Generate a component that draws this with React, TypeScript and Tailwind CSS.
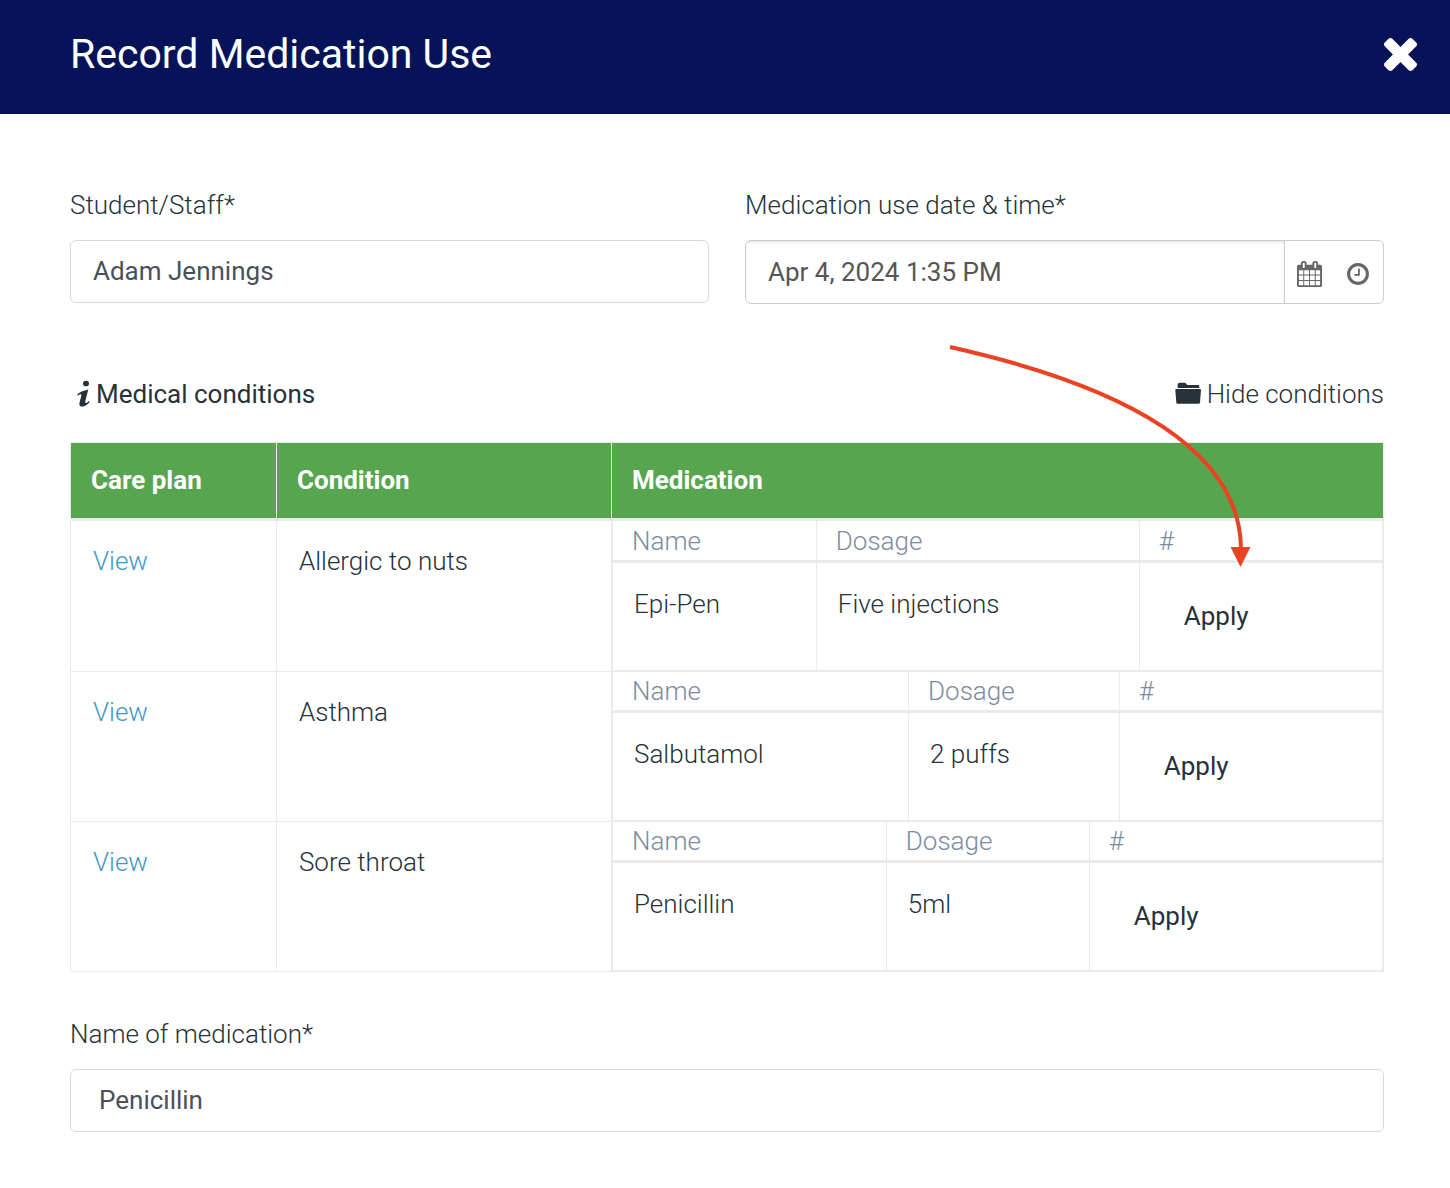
import React from 'react';

interface Condition {
  condition: string;
  medication: string;
  dosage: string;
  nameCol: string;
  dosageCol: string;
}

const CONDITIONS: Condition[] = [
  { condition: 'Allergic to nuts', medication: 'Epi-Pen', dosage: 'Five injections', nameCol: 'w-[26.5%]', dosageCol: 'w-[42%]' },
  { condition: 'Asthma', medication: 'Salbutamol', dosage: '2 puffs', nameCol: 'w-[38.5%]', dosageCol: 'w-[27.4%]' },
  { condition: 'Sore throat', medication: 'Penicillin', dosage: '5ml', nameCol: 'w-[35.6%]', dosageCol: 'w-[26.4%]' },
];

const CloseIcon: React.FC = () => (
  <svg viewBox="302 366 1188 1188" className="w-[33px] h-[33px]" fill="currentColor" aria-hidden="true">
    <path d="M1490 1322q0 40-28 68l-136 136q-28 28-68 28t-68-28l-294-294-294 294q-28 28-68 28t-68-28l-136-136q-28-28-28-68t28-68l294-294-294-294q-28-28-28-68t28-68l136-136q28-28 68-28t68 28l294 294 294-294q28-28 68-28t68 28l136 136q28 28 28 68t-28 68l-294 294 294 294q28 28 28 68z" />
  </svg>
);

const CalendarIcon: React.FC = () => (
  <svg viewBox="64 0 1664 1792" className="w-[25px] h-[26px]" fill="currentColor" preserveAspectRatio="none" aria-hidden="true">
    <path d="M192 1664h288v-288h-288v288zm352 0h320v-288h-320v288zm-352-352h288v-320h-288v320zm352 0h320v-320h-320v320zm-352-384h288v-288h-288v288zm736 736h320v-288h-320v288zm-384-736h320v-288h-320v288zm768 736h288v-288h-288v288zm-384-352h320v-320h-320v320zm-352-864v-288q0-13-9.5-22.5t-22.5-9.5h-64q-13 0-22.5 9.5t-9.5 22.5v288q0 13 9.5 22.5t22.5 9.5h64q13 0 22.5-9.5t9.5-22.5zm736 864h288v-320h-288v320zm-384-384h320v-288h-320v288zm384 0h288v-288h-288v288zm32-480v-288q0-13-9.5-22.5t-22.5-9.5h-64q-13 0-22.5 9.5t-9.5 22.5v288q0 13 9.5 22.5t22.5 9.5h64q13 0 22.5-9.5t9.5-22.5zm384-64v1280q0 52-38 90t-90 38h-1408q-52 0-90-38t-38-90v-1280q0-52 38-90t90-38h128v-96q0-66 47-113t113-47h64q66 0 113 47t47 113v96h384v-96q0-66 47-113t113-47h64q66 0 113 47t47 113v96h128q52 0 90 38t38 90z" />
  </svg>
);

const ClockIcon: React.FC = () => (
  <svg viewBox="128 128 1536 1536" className="w-[22px] h-[22px]" fill="currentColor" aria-hidden="true">
    <path d="M1024 544v448q0 14-9 23t-23 9h-320q-14 0-23-9t-9-23v-64q0-14 9-23t23-9h224v-352q0-14 9-23t23-9h64q14 0 23 9t9 23zm416 352q0-148-73-273t-198-198-273-73-273 73-198 198-73 273 73 273 198 198 273 73 273-73 198-198 73-273zm224 0q0 209-103 385.5t-279.5 279.5-385.5 103-385.5-103-279.5-279.5-103-385.5 103-385.5 279.5-279.5 385.5-103 385.5 103 279.5 279.5 103 385.5z" />
  </svg>
);

const InfoIcon: React.FC = () => (
  <svg viewBox="50 58 39 81" className="mb-0.5 w-[13px] h-[27px]" fill="currentColor" aria-hidden="true">
    <ellipse cx="77" cy="68.5" rx="9" ry="8.5" />
    <path d="M51 101 Q60 93 68 91 Q78 89 84 86 L75 121 Q73 128 78 127 Q82 125 86 121 L88 124 Q78 137 65 138 Q54 137 58 124 L63 105 Q64 100 59 101 L52 105 Z" />
  </svg>
);

const FolderIcon: React.FC = () => (
  <svg viewBox="135 66 79 66" className="mb-0.5 w-[26px] h-[22px]" fill="currentColor" aria-hidden="true">
    <path d="M143 84V73q1-5 6-5h14q4 0 6 3l2 2q2 2 5 2h29q4 0 4 4v5z" />
    <path d="M138 87h73q3 0 3 3l-3 38q-1 4-4 4h-64q-4 0-4-4l-3-38q0-3 2-3z" />
  </svg>
);

const Arrow: React.FC = () => (
  <svg
    viewBox="948 344 304 224"
    className="absolute -top-[34px] right-[132px] w-[304px] h-[224px] pointer-events-none"
    aria-hidden="true"
  >
    <path d="M950 347Q1240 412 1241 549" fill="none" stroke="#ec4224" strokeWidth="4" />
    <path d="M1230.5 547h20l-10 20z" fill="#ec4224" />
  </svg>
);

const MedicationTable: React.FC<{ item: Condition }> = ({ item }) => {
  const th = 'h-[41px] group-first/row:h-[42px] border-b-[3px] border-[#e9eaee] px-[19px] text-left leading-8 font-light text-[#7d8b9f]';
  const td = 'h-[108px] border-b border-[#e9eaee] px-[21px] pt-[21px] align-top leading-10';

  return (
    <table className="w-full table-fixed border-separate border-spacing-0 border-x border-[#e9eaee]">
      <thead>
        <tr>
          <th className={`${th} border-r ${item.nameCol}`}>Name</th>
          <th className={`${th} border-r ${item.dosageCol}`}>Dosage</th>
          <th className={th}>#</th>
        </tr>
      </thead>
      <tbody>
        <tr>
          <td className={`${td} border-r`}>{item.medication}</td>
          <td className={`${td} border-r`}>{item.dosage}</td>
          <td className={td}>
            <button type="button" className="block h-16 px-[23px] font-normal">Apply</button>
          </td>
        </tr>
      </tbody>
    </table>
  );
};

const App: React.FC = () => {
  const label = 'block mb-[19px] leading-8';
  const input = 'block w-full h-[63px] rounded-md border border-[#d7d8da] pb-0.5 font-normal text-[#4b5058]';
  const headCell = 'h-[79px] border-r border-b-[3px] border-[#e9eaee] bg-[#58a54f] bg-clip-padding px-5 text-left font-bold text-white';
  const cell = 'border-r border-b border-[#e9eaee] px-[22px] pt-5 align-top leading-10';

  return (
    <div className="min-h-screen bg-white font-[Roboto,sans-serif] text-[26px] font-light text-[#263238]">
      <header className="flex items-center justify-between bg-[#061359] pt-6 pb-[30px] pl-[70px] pr-[33px] text-white">
        <h1 className="text-[41px] leading-[60px] font-normal">Record Medication Use</h1>
        <button type="button" aria-label="Close">
          <CloseIcon />
        </button>
      </header>

      <main className="pt-[75px] pb-14 pl-[70px] pr-[66px]">
        <div className="grid grid-cols-2 gap-9">
          <div>
            <label htmlFor="student" className={label}>Student/Staff*</label>
            <input id="student" type="text" defaultValue="Adam Jennings" className={`${input} px-[22px]`} />
          </div>
          <div>
            <label htmlFor="date" className={label}>Medication use date &amp; time*</label>
            <div className="flex h-16 overflow-hidden rounded-md border border-[#cccccc] text-[#666666]">
              <input
                id="date"
                type="text"
                defaultValue="Apr 4, 2024 1:35 PM"
                className="min-w-0 flex-1 border-r border-[#cccccc] px-[22px] font-normal text-[#555555] shadow-[inset_0_2px_2px_rgba(0,0,0,0.08)]"
              />
              <div className="flex items-center gap-[25px] pt-1 pl-3 pr-[14px]">
                <button type="button" aria-label="Pick date"><CalendarIcon /></button>
                <button type="button" aria-label="Pick time"><ClockIcon /></button>
              </div>
            </div>
          </div>
        </div>

        <section className="relative mt-[74px]">
          <div className="mb-8 flex items-center justify-between leading-8">
            <h2 className="flex items-center gap-[6px] pl-[7px] font-normal">
              <InfoIcon />
              Medical conditions
            </h2>
            <button type="button" className="flex items-center gap-[6px]">
              <FolderIcon />
              Hide conditions
            </button>
          </div>

          <table className="w-full table-fixed border-separate border-spacing-0">
            <thead>
              <tr>
                <th className={`${headCell} w-[15.75%] border-l border-t`}>Care plan</th>
                <th className={`${headCell} w-[25.5%] border-t`}>Condition</th>
                <th className={`${headCell} border-t`}>Medication</th>
              </tr>
            </thead>
            <tbody>
              {CONDITIONS.map((item) => (
                <tr key={item.condition} className="group/row">
                  <td className={`${cell} border-l`}>
                    <a href="#" className="text-[#4196c8]">View</a>
                  </td>
                  <td className={cell}>{item.condition}</td>
                  <td className="border-r border-b border-[#e9eaee] p-0">
                    <MedicationTable item={item} />
                  </td>
                </tr>
              ))}
            </tbody>
          </table>

          {/* Points at the Apply button of the first medication */}
          <Arrow />
        </section>

        <div className="mt-[46px]">
          <label htmlFor="medication" className={label}>Name of medication*</label>
          <input id="medication" type="text" defaultValue="Penicillin" className={`${input} px-7`} />
        </div>
      </main>
    </div>
  );
};

export default App;
